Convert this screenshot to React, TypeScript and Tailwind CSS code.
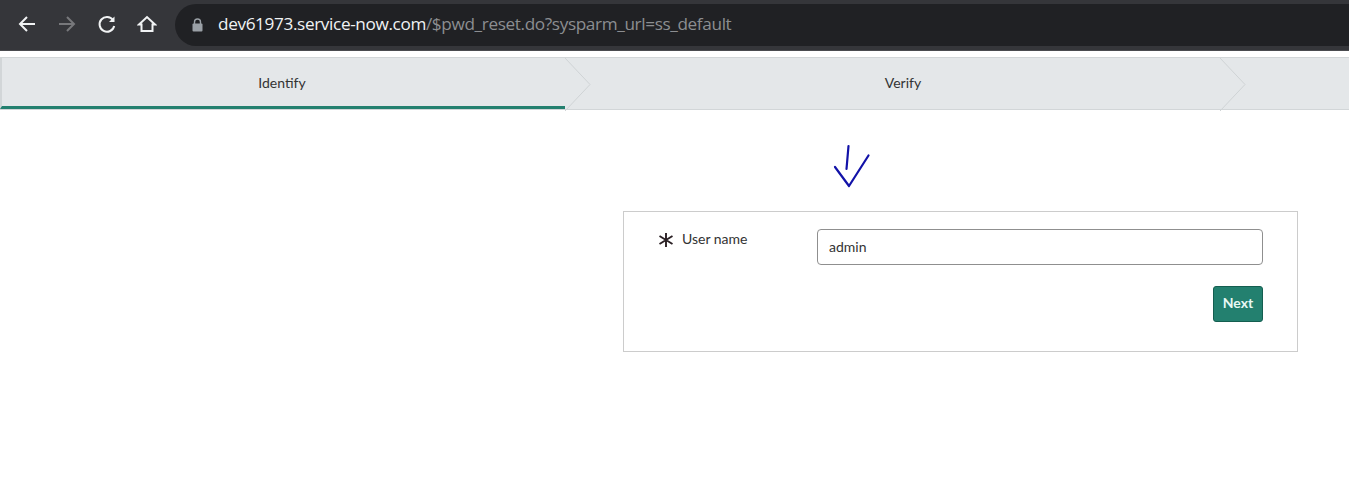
export default function App() {
  const chevron = (
    <svg width="26" height="54" viewBox="0 0 26 54" fill="none" className="absolute left-0 top-0">
      <path d="M0 0 L25 26.5 L0 53" stroke="#cfd3d5" strokeWidth="1" />
    </svg>
  );
  return (
    <div className="h-[479px] w-[1349px] overflow-hidden bg-white font-['Open_Sans',sans-serif]">
      <div className="flex h-[51px] items-center border-b-[1px] border-[#4a4b4f] bg-[#35363a] pl-[17px]">
        <div className="mt-[-2px] flex items-center">
          <svg width="20" height="20" viewBox="0 0 20 20" fill="none" stroke="#f1f3f4" strokeWidth="2">
            <path d="M18 10 H3 M10 3 L3 10 L10 17" />
          </svg>
          <svg width="20" height="20" viewBox="0 0 20 20" fill="none" stroke="#77787b" strokeWidth="2" className="ml-[20px]">
            <path d="M2 10 H17 M10 3 L17 10 L10 17" />
          </svg>
          <svg width="20" height="20" viewBox="0 0 20 20" fill="none" stroke="#f1f3f4" strokeWidth="2" className="ml-[20px]">
            <path d="M16 6 A7.4 7.4 0 1 0 17.2 12" />
            <path d="M17.5 2.5 V8 H12 Z" fill="#f1f3f4" strokeWidth="0" />
          </svg>
          <svg width="20" height="20" viewBox="0 0 20 20" fill="none" stroke="#f1f3f4" strokeWidth="2" className="ml-[20px]">
            <path d="M2 10.5 L10 3 L18 10.5 H15.5 V17 H4.5 V10.5 Z" strokeLinejoin="miter" />
          </svg>
        </div>
        <div className="ml-[18px] flex h-[42px] flex-1 items-center rounded-l-[21px] bg-[#202124] pl-[17px]">
          <svg width="11" height="14" viewBox="0 0 11 14" className="shrink-0">
            <path d="M2.5 6 V4 A3 3 0 0 1 8.5 4 V6" fill="none" stroke="#9aa0a6" strokeWidth="1.4" />
            <rect x="0.5" y="5.5" width="10" height="8" rx="1" fill="#9aa0a6" />
          </svg>
          <div className="ml-[15px] mt-[-2px] whitespace-nowrap text-[17.2px] tracking-[-0.37px]">
            <span className="text-[#f1f3f4]">dev61973.service-now.com</span>
            <span className="text-[#8c8e91]">/$pwd_reset.do?sysparm_url=ss_default</span>
          </div>
        </div>
      </div>

      <div className="mt-[6px] flex h-[53px] border-y border-[#d2d6d8] bg-[#e4e7e9] font-['Lato',sans-serif] text-[14px] text-[#333]">
        <div className="relative flex w-[565px] shrink-0 items-center justify-center border-b-[3px] border-[#23806f] border-l-[2px] border-l-[#d2d6d8] pr-[3px]">
          <span>Identify</span>
        </div>
        <div className="relative flex w-[655px] shrink-0 items-center justify-center pl-[21px]">
          {chevron}
          <span className="mt-[-3px]">Verify</span>
        </div>
        <div className="relative flex-1">{chevron}</div>
      </div>

      <div className="flex justify-end pr-[51px]">
        <div className="w-[675px]">
          <div className="flex h-[101px] justify-center pt-[34px]">
            <svg width="42" height="46" viewBox="0 0 42 46" fill="none" stroke="#1212a8" strokeWidth="2.2" strokeLinecap="round" strokeLinejoin="round" className="ml-[-217px]">
              <path d="M17.5 2 L15.5 25" />
              <path d="M4 23 L18 42 L37.5 11.5" />
            </svg>
          </div>
          <div className="h-[141px] border border-[#cccccc] px-[34px] pt-[17px] font-['Lato',sans-serif]">
            <div className="flex items-start">
              <span className="mt-[1px] flex h-[20px] w-[24px] items-center">
                <svg width="16" height="16" viewBox="0 0 16 16" stroke="#2a2024" strokeWidth="1.9">
                  <path d="M8 1 V15 M1.5 4 L14.5 12 M14.5 4 L1.5 12" />
                </svg>
              </span>
              <span className="w-[135px] text-[14px] leading-[20px] text-[#333]">User name</span>
              <input
                readOnly
                value="admin"
                className="h-[36px] w-[446px] rounded-[4px] border border-[#8f8f8f] px-[11px] pb-[2px] text-[14px] text-[#333] outline-none"
              />
            </div>
            <div className="mt-[21px] flex justify-end">
              <button className="h-[36px] w-[50px] rounded-[3px] border border-[#145e50] bg-[#23806f] pb-[3px] text-[14px] font-bold text-[#e8f8f4]">
                Next
              </button>
            </div>
          </div>
        </div>
      </div>
    </div>
  );
}
